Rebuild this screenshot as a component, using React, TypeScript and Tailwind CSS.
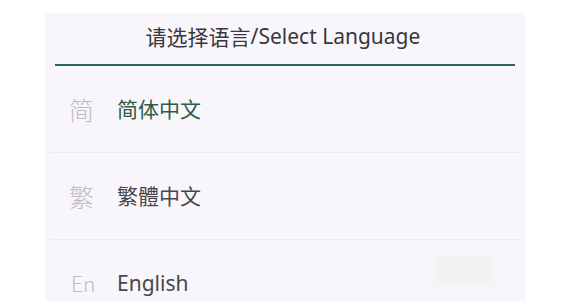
import React from "react";

const font = { fontFamily: '"Noto Sans", "Open Sans", "Noto Sans CJK SC", sans-serif' };

function Row({ icon, label, active, last, small }: { icon: string; label: string; active?: boolean; last?: boolean; small?: boolean }) {
  return (
    <div className="flex flex-col">
      <div className="flex h-[86px] items-center pl-[24px]">
        <span
          className={`w-[48px] leading-none text-[#bfbbc6] ${small ? "pl-[2px] text-[21px]" : "text-[25px]"}`}
          style={{ fontFamily: '"Noto Sans CJK SC", "Noto Sans", sans-serif', fontWeight: 300 }}
        >
          {icon}
        </span>
        <span className={`text-[21px] leading-none ${active ? "text-[#2e5c49]" : "text-[#48464d]"}`}>{label}</span>
      </div>
      {!last && <div className="mx-[5px] h-px bg-[#ebe8ee]" />}
    </div>
  );
}

export default function App() {
  return (
    <div className="relative h-[301px] w-[572px] overflow-hidden bg-white" style={font}>
      <div className="ml-[45px] mt-[13px] h-[300px] w-[480px] bg-[#f8f6fa]">
        <div className="flex h-[51px] items-center justify-center pb-[4px] pr-[4px] text-[21px] text-[#39373d]">
          <span style={{ fontFamily: '"Noto Sans CJK SC", sans-serif' }}>请选择语言</span>
          <span>/Select Language</span>
        </div>
        <div className="mx-[10px] h-[2px] bg-[#2f6453]" />
        <Row icon="简" label="简体中文" active />
        <Row icon="繁" label="繁體中文" />
        <Row icon="En" label="English" last small />
      </div>
      <div className="absolute left-[435px] top-[256px] h-[30px] w-[58px] bg-[#f2f1f3] blur-[2px]" />
    </div>
  );
}
